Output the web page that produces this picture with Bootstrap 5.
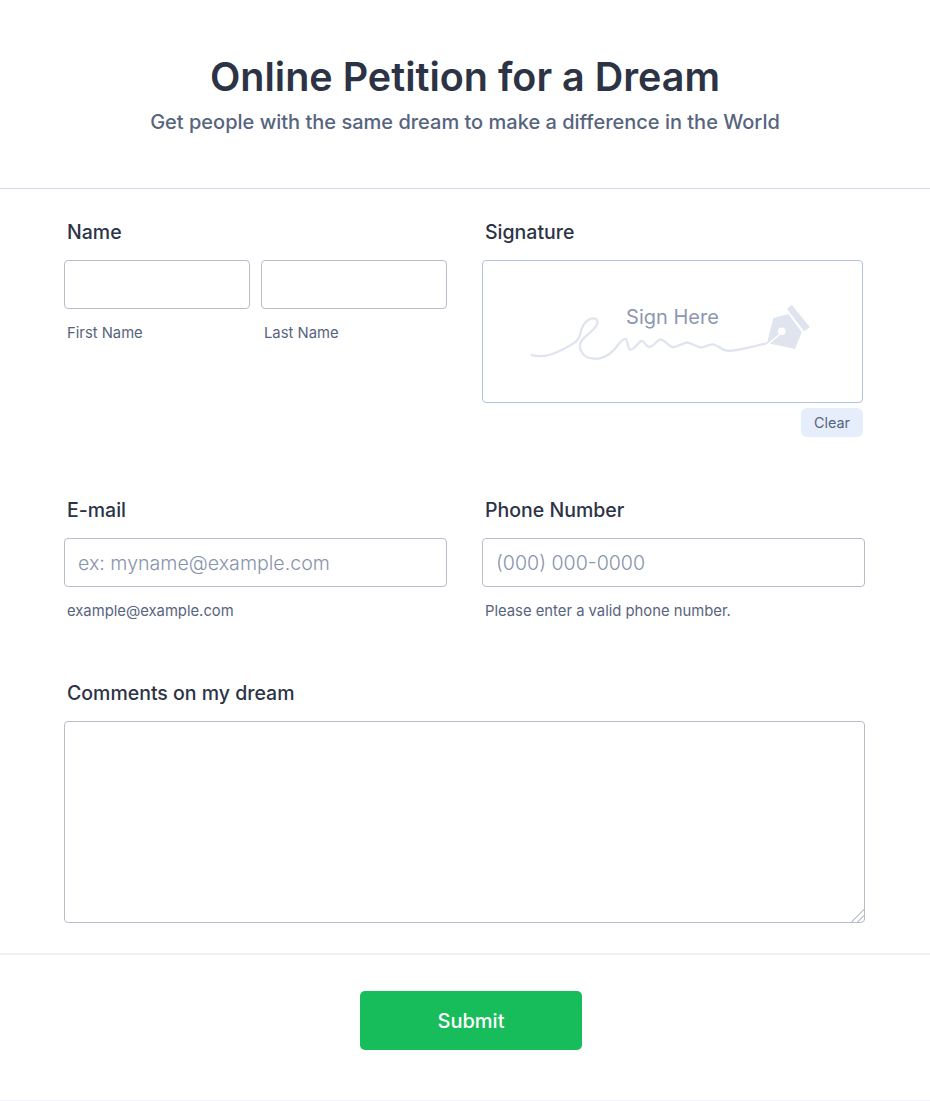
<!DOCTYPE html>
<html lang="en">
<head>
<meta charset="utf-8">
<title>Online Petition for a Dream</title>
<link href="https://cdn.jsdelivr.net/npm/bootstrap@5.3.0/dist/css/bootstrap.min.css" rel="stylesheet">
<style>
html,body{background:#fff;font-family:Inter,"Liberation Sans",sans-serif;color:#2c3345;}
.page-wrap{height:1101px;overflow:hidden;border-bottom:1px solid #f1f3f8;}
.form-head{height:189px;padding-top:52px;border-bottom:1px solid #d8dae9;text-align:center;}
.form-title{font-size:39.500px;font-weight:600;line-height:50px;margin:0;color:#2c3345;}
.form-sub{font-size:20px;font-weight:450;line-height:30px;margin:5px 0 0;color:#57647e;}
.form-body{padding:0 65px 0 64px;}
.field-row{display:grid;grid-template-columns:383px 383px;column-gap:35px;}
.field-label{display:block;font-size:19.500px;font-weight:500;line-height:28px;margin:1px 0 14px 3px;color:#2c3345;}
.field-input{display:block;width:100%;height:49px;border:1px solid #b8bdc9;border-radius:4px;padding:0 13px;font-size:19.600px;box-shadow:none;color:#2c3345;font-weight:300;}
.field-input::placeholder{color:#8894ab;font-weight:300;opacity:1;}
.field-input:focus{border-color:#b8bdc9;box-shadow:none;}
.field-hint{display:block;font-size:14.800px;line-height:20px;margin:14px 0 0 3px;color:#57647e;}
.name-pair{display:grid;grid-template-columns:186px 186px;column-gap:11px;}
.row-name{padding-top:28px;height:306px;}
.row-contact{height:183px;padding-top:0;}
.sig-box{width:381px;height:143px;border:1px solid #b1c4e0;border-radius:4px;position:relative;background:#fff;}
.sig-text{position:absolute;left:0;right:0;top:42px;text-align:center;font-size:20px;line-height:28px;color:#8d97b0;}
.sig-art{position:absolute;left:46px;top:41px;}
.sig-actions{width:381px;display:flex;justify-content:flex-end;margin-top:5px;}
.btn-clear{background:#e6eefb;border:0;border-radius:6px;color:#57647e;font-size:14.400px;line-height:20px;padding:5px 0 4px;width:62px;height:29px;}
.btn-clear:hover{background:#e6eefb;color:#57647e;}
.field-area{display:block;width:801px;height:202px;border:1px solid #b8bdc9;border-radius:4px;box-shadow:none;}
.field-area:focus{border-color:#b8bdc9;box-shadow:none;}
.field-area::-webkit-resizer{background:linear-gradient(135deg,transparent 55%,#c9ccd6 55%,#c9ccd6 62%,transparent 62%,transparent 75%,#c9ccd6 75%,#c9ccd6 82%,transparent 82%);}
.form-foot{margin-top:30px;border-top:2px solid #eef1f6;padding-top:36px;text-align:center;}
.btn-send{display:inline-block;width:222px;height:59px;margin-left:12px;background:#18bd5b;border:0;border-radius:5px;color:#fff;font-size:20px;font-weight:500;}
.btn-send:hover{background:#18bd5b;color:#fff;}
</style>
</head>
<body>
<div class="page-wrap">
  <header class="form-head">
    <h1 class="form-title">Online Petition for a Dream</h1>
    <p class="form-sub">Get people with the same dream to make a difference in the World</p>
  </header>
  <form class="form-body" onsubmit="return false">
    <div class="field-row row-name">
      <div>
        <label class="field-label">Name</label>
        <div class="name-pair">
          <div><input class="field-input form-control" type="text" aria-label="First Name"><span class="field-hint">First Name</span></div>
          <div><input class="field-input form-control" type="text" aria-label="Last Name"><span class="field-hint">Last Name</span></div>
        </div>
      </div>
      <div>
        <label class="field-label">Signature</label>
        <div class="sig-box">
          <div class="sig-text">Sign Here</div>
          <svg class="sig-art" width="284" height="60" viewBox="0 0 284 60" fill="none">
            <path d="M2.700 53C8 54.500 14 54.500 20 53C27 51 34 47.500 40 44C46 41 50 38 51 33C52 27 54 21 60 17.500C65 15 69 17 68.500 21C67 27 60 31 56 35C51 39 50 44 52 49C55 55 62 57.500 70 56.500C78 55 84 50 89 43C92 39 95 36 97 37C99 39 98 45 101 47.500C104 49 108 42 112 39C115 37.500 116 44 120 45C124 45.500 127 39 131 37.500C135 37 138 43 143 45C148 46 153 41 158 40.500C163 41 167 45 172 45.500C176 45.500 180 41.500 185 42.500C189 43.500 192 48 198 48.700C206 49.500 215 46.500 237.700 41.300" stroke="#e0e4ef" stroke-width="2.300" stroke-linecap="round"/>
            <path d="M238 41L244.300 16L259.300 12L272.700 30L266 47Z" fill="#e0e4ef"/>
            <path d="M258 7L262.700 2.700L281 25.300L275 29.300Z" fill="#e0e4ef"/>
            <path d="M238 43L251 32" stroke="#fff" stroke-width="1.500"/>
            <circle cx="252.700" cy="29.300" r="3.800" fill="#fff"/>
          </svg>
        </div>
        <div class="sig-actions"><button type="button" class="btn btn-clear">Clear</button></div>
      </div>
    </div>
    <div class="field-row row-contact">
      <div>
        <label class="field-label">E-mail</label>
        <input class="field-input form-control" type="email" placeholder="ex: myname@example.com">
        <span class="field-hint">example@example.com</span>
      </div>
      <div>
        <label class="field-label">Phone Number</label>
        <input class="field-input form-control" type="tel" placeholder="(000) 000-0000">
        <span class="field-hint">Please enter a valid phone number.</span>
      </div>
    </div>
    <div>
      <label class="field-label">Comments on my dream</label>
      <textarea class="field-area form-control"></textarea>
    </div>
  </form>
  <footer class="form-foot">
    <button type="button" class="btn btn-send">Submit</button>
  </footer>
</div>
</body>
</html>
